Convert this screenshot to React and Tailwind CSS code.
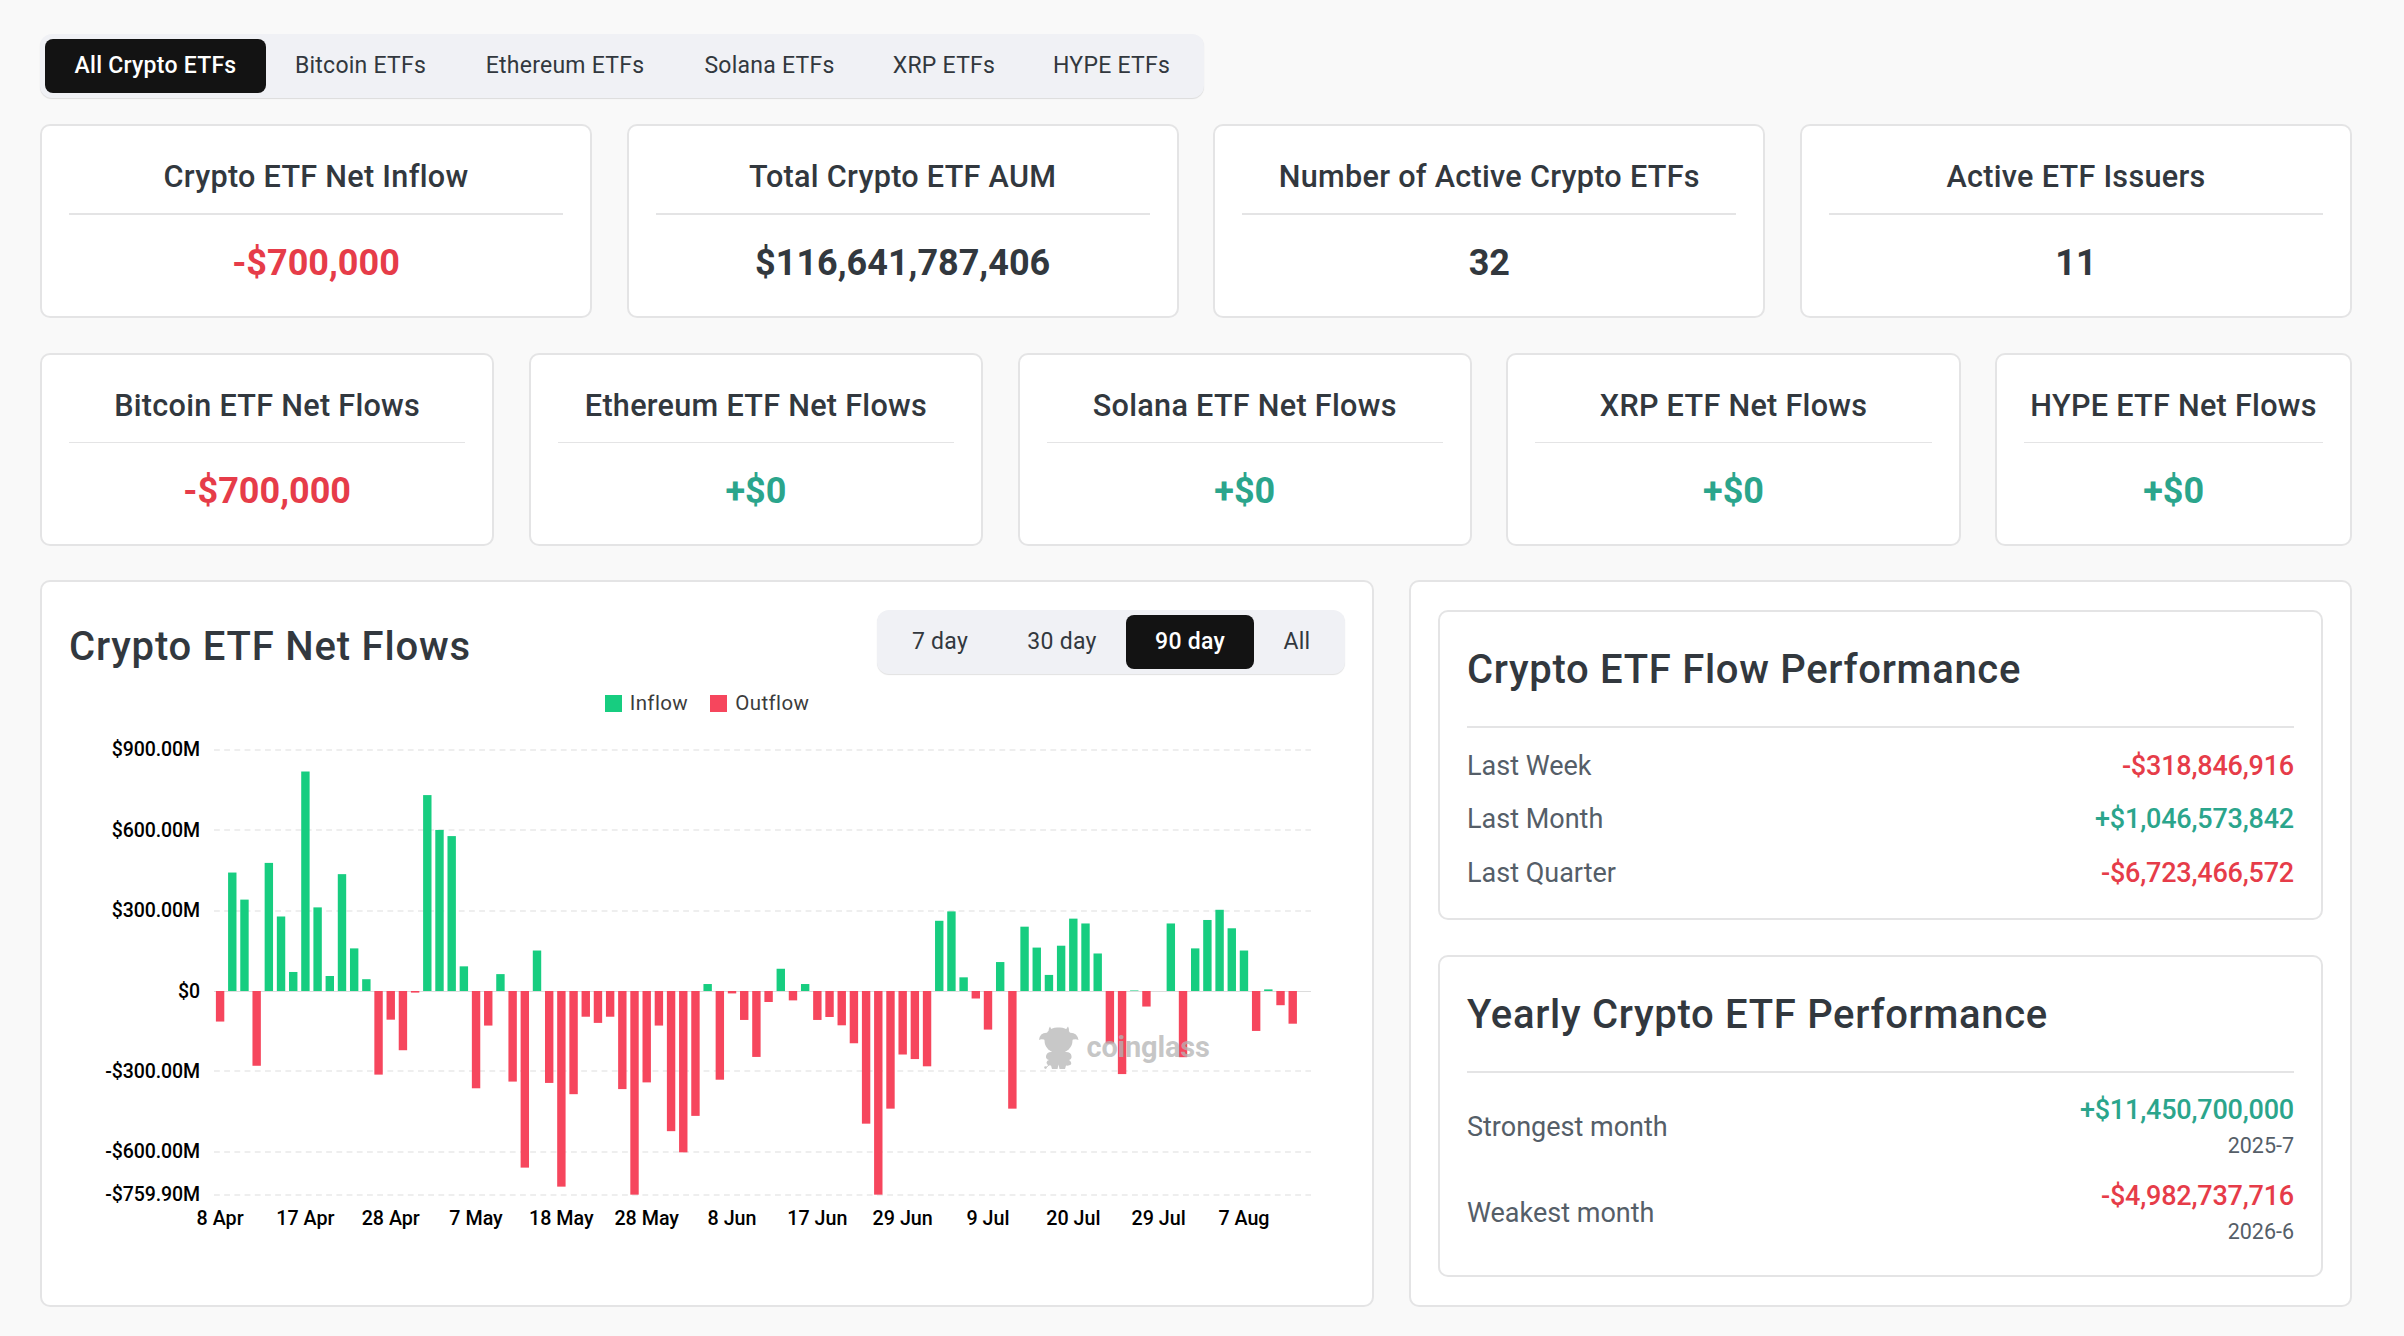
import clsx from 'clsx';

const TABS = [
  { label: 'All Crypto ETFs', width: 'w-[221px]' },
  { label: 'Bitcoin ETFs', width: 'w-[189px]' },
  { label: 'Ethereum ETFs', width: 'w-[220px]' },
  { label: 'Solana ETFs', width: 'w-[189px]' },
  { label: 'XRP ETFs', width: 'w-[160px]' },
  { label: 'HYPE ETFs', width: 'w-[175px]' },
];

const RANGES = [
  { label: '7 day', width: 'w-[116px]' },
  { label: '30 day', width: 'w-[128px]' },
  { label: '90 day', width: 'w-[128px]' },
  { label: 'All', width: 'w-[86px]' },
];

const SUMMARY = [
  { title: 'Crypto ETF Net Inflow', value: '-$700,000', tone: 'down' },
  { title: 'Total Crypto ETF AUM', value: '$116,641,787,406' },
  { title: 'Number of Active Crypto ETFs', value: '32' },
  { title: 'Active ETF Issuers', value: '11' },
];

const FLOWS = [
  { title: 'Bitcoin ETF Net Flows', value: '-$700,000', tone: 'down' },
  { title: 'Ethereum ETF Net Flows', value: '+$0', tone: 'up' },
  { title: 'Solana ETF Net Flows', value: '+$0', tone: 'up' },
  { title: 'XRP ETF Net Flows', value: '+$0', tone: 'up' },
  { title: 'HYPE ETF Net Flows', value: '+$0', tone: 'up' },
];

const PERFORMANCE = [
  { label: 'Last Week', value: '-$318,846,916', tone: 'down' },
  { label: 'Last Month', value: '+$1,046,573,842', tone: 'up' },
  { label: 'Last Quarter', value: '-$6,723,466,572', tone: 'down' },
];

const YEARLY = [
  { label: 'Strongest month', value: '+$11,450,700,000', date: '2025-7', tone: 'up' },
  { label: 'Weakest month', value: '-$4,982,737,716', date: '2026-6', tone: 'down' },
];

// Daily net flow, in millions of dollars
const DAILY = [
  -114, 442, 341, -279, 478, 278, 71, 819, 312, 56, 436, 159, 44, -312, -107, -221, -6, 731, 601, 578,
  92, -363, -129, 63, -338, -659, 151, -343, -730, -385, -96, -119, -96, -366, -759.9, -341, -129, -523,
  -602, -466, 26, -331, -9, -108, -246, -41, 83, -35, 26, -108, -97, -128, -195, -495, -759.9, -439, -237,
  -254, -281, 262, 297, 51, -28, -144, 108, -439, 240, 162, 60, 169, 270, 252, 140, -196, -310, 2, -58, 0,
  252, -247, 159, 265, 303, 234, 151, -149, 6, -53, -122, 0,
];

const Y_TICKS = [
  { value: 900, label: '$900.00M' },
  { value: 600, label: '$600.00M' },
  { value: 300, label: '$300.00M' },
  { value: 0, label: '$0' },
  { value: -300, label: '-$300.00M' },
  { value: -600, label: '-$600.00M' },
  { value: -759.9, label: '-$759.90M' },
];

const X_TICKS = [
  '8 Apr', '17 Apr', '28 Apr', '7 May', '18 May', '28 May', '8 Jun',
  '17 Jun', '29 Jun', '9 Jul', '20 Jul', '29 Jul', '7 Aug',
];

const PLOT = { left: 145, right: 1242, zero: 275, scale: 0.268 };
const STEP = (PLOT.right - PLOT.left) / DAILY.length;

const toneClass = (tone) =>
  tone === 'up' ? 'text-[#2ba58c]' : tone === 'down' ? 'text-[#e63c49]' : 'text-[#32383e]';

const yFor = (value) => PLOT.zero - value * PLOT.scale;

const Segmented = ({ items, active }) => (
  <div className="flex h-16 w-fit rounded-[12px] bg-[#f0f1f5] p-[5px] shadow-[0_1px_1px_rgba(0,0,0,0.12)]">
    {items.map(({ label, width }) => (
      <button
        key={label}
        className={clsx(
          'flex items-center justify-center rounded-lg pt-px text-[23px] tracking-[0.25px]',
          width,
          label === active ? 'bg-[#131313] font-medium text-white' : 'text-[#32383e]'
        )}
      >
        {label}
      </button>
    ))}
  </div>
);

const StatCard = ({ title, value, tone, thin }) => (
  <div className="rounded-[10px] border-2 border-[#e4e4e5] bg-white px-[27px] pt-[25px]">
    <h3 className="h-[52px] whitespace-nowrap text-center text-[30.6px] font-medium leading-[52px] tracking-[0.28px] text-[#32383e]">
      {title}
    </h3>
    <div className={clsx('mt-[10px] border-[#e4e4e5]', thin ? 'mb-px border-t' : 'border-t-2')} />
    <div className={clsx('mt-[21px] text-center text-[36px] font-bold leading-[54px]', toneClass(tone))}>
      {value}
    </div>
  </div>
);

// Bull mascot and wordmark laid over the bars
const Watermark = () => (
  <g>
    <g transform="translate(970 310)" fill="#c8c8c8">
      <path d="M11 0.500 Q8.500 4 10.500 7 L14 4 Q11.500 3 11 0.500Z" />
      <path d="M29 0.500 Q31 4 29 7 L25 4 Q28 3 29 0.500Z" />
      <path d="M10 7 Q1 5.500 0 14 Q3 12.500 7 14.500Z" />
      <path d="M29 7 Q38 5.500 39.500 14 Q36 12.500 32 14.500Z" />
      <rect x="5.5" y="1.5" width="28" height="25.5" rx="12.5" />
      <path d="M12 26 H27 Q32 26 32.500 30 Q33 33 30 34 Q33 36 32 38.500 Q30 40 27 39.500 L26 43 H20.500 L19.500 38.500 L18.500 43 H13 L12 39.500 Q8 40 7.500 36.500 Q8 34 10 34 Q6.500 33 7 30 Q8 26 12 26Z" />
      <path d="M6 42.500 L10.500 38.500" stroke="#c8c8c8" />
      <circle cx="6.5" cy="41.5" r="1.3" />
    </g>
    <text x="1017.5" y="341" fill="#b4b4b4" fillOpacity="0.75" fontSize="29" fontWeight="700" letterSpacing="-0.2">
      coinglass
    </text>
  </g>
);

const FlowChart = () => (
  <svg viewBox="0 0 1276 560" className="block h-[560px] w-[1276px]">
    {Y_TICKS.map(({ value, label }) => (
      <g key={label}>
        {value === 0 ? (
          <line x1={PLOT.left} x2={PLOT.right} y1="275.5" y2="275.5" stroke="#dcdcdc" />
        ) : (
          <line
            x1={PLOT.left}
            x2={PLOT.right}
            y1={Math.round(yFor(value))}
            y2={Math.round(yFor(value))}
            stroke="#eeeeee"
            strokeWidth="2"
            strokeDasharray="5.8 4.4"
          />
        )}
        <text x="131" y={yFor(value) + 6.5} textAnchor="end" fontSize="19.5" fontWeight="500" letterSpacing="-0.1">
          {label}
        </text>
      </g>
    ))}
    {DAILY.map((value, i) => (
      <rect
        key={i}
        x={PLOT.left + STEP * (i + 0.5) - 4.2}
        y={Math.min(yFor(value), PLOT.zero)}
        width="8.4"
        height={Math.abs(value) * PLOT.scale}
        fill={value > 0 ? '#17cd80' : '#f6465d'}
      />
    ))}
    {X_TICKS.map((label, i) => (
      <text key={label} x={PLOT.left + STEP * (i * 7 + 0.5)} y="509" textAnchor="middle" fontSize="19.7" fontWeight="500">
        {label}
      </text>
    ))}
    <Watermark />
  </svg>
);

const PerformanceCard = ({ title, className, children }) => (
  <div className={clsx('rounded-[10px] border-2 border-[#e4e4e5] px-[27px] pt-[27px]', className)}>
    <h2 className="text-[40px] font-medium leading-[62px] tracking-[0.7px] text-[#32383e]">{title}</h2>
    <div className="mt-[25px] border-t-2 border-[#e4e4e5]" />
    {children}
  </div>
);

const valueClass = 'text-[27px] font-medium tracking-[-0.2px]';

export default function App() {
  return (
    <div className="h-[1336px] w-[2404px] bg-[#f9f9f9] pl-10 pr-[52px] pt-[34px] font-['Roboto',sans-serif]">
      <Segmented items={TABS} active="All Crypto ETFs" />

      <div className="mt-[26px] grid h-[194px] grid-cols-4 gap-[34.67px]">
        {SUMMARY.map((card) => (
          <StatCard key={card.title} {...card} />
        ))}
      </div>

      <div className="mt-[35px] grid h-[193px] grid-cols-[454.3px_454.3px_454.3px_454.3px_1fr] gap-[34.5px]">
        {FLOWS.map((card) => (
          <StatCard key={card.title} {...card} thin />
        ))}
      </div>

      <div className="mt-[34px] flex h-[727px] gap-[35px]">
        <div className="w-[1334px] rounded-[10px] border-2 border-[#e4e4e5] bg-white px-[27px] pt-7">
          <div className="flex items-start justify-between">
            <h2 className="mt-[5px] text-[40px] font-medium leading-[64px] tracking-[0.8px] text-[#32383e]">
              Crypto ETF Net Flows
            </h2>
            <Segmented items={RANGES} active="90 day" />
          </div>
          <div className="mt-[11px] flex h-[26px] items-center justify-center gap-[22px] text-[20.5px] tracking-[0.4px] text-[#3c3c3c]">
            <div className="flex items-center gap-2">
              <span className="size-[17px] bg-[#17cd80]" />
              Inflow
            </div>
            <div className="flex items-center gap-2">
              <span className="size-[17px] bg-[#f6465d]" />
              Outflow
            </div>
          </div>
          <FlowChart />
        </div>

        <div className="flex-1 rounded-[10px] border-2 border-[#e4e4e5] bg-white px-[27px] pt-7">
          <PerformanceCard title="Crypto ETF Flow Performance" className="h-[310px]">
            <div className="mt-[11px]">
              {PERFORMANCE.map(({ label, value, tone }) => (
                <div key={label} className="flex h-[53.6px] items-center justify-between">
                  <span className="text-[27px] text-[#555e68]">{label}</span>
                  <span className={clsx(valueClass, toneClass(tone))}>{value}</span>
                </div>
              ))}
            </div>
          </PerformanceCard>

          <PerformanceCard title="Yearly Crypto ETF Performance" className="mt-[35px] h-[322px]">
            <div className="mt-[11px]">
              {YEARLY.map(({ label, value, date, tone }) => (
                <div key={label} className="flex h-[86px] items-center justify-between">
                  <span className="text-[27px] text-[#555e68]">{label}</span>
                  <div className="text-right">
                    <div className={clsx(valueClass, 'leading-[38px]', toneClass(tone))}>{value}</div>
                    <div className="text-[21.5px] leading-[34px] text-[#555e68]">{date}</div>
                  </div>
                </div>
              ))}
            </div>
          </PerformanceCard>
        </div>
      </div>
    </div>
  );
}
